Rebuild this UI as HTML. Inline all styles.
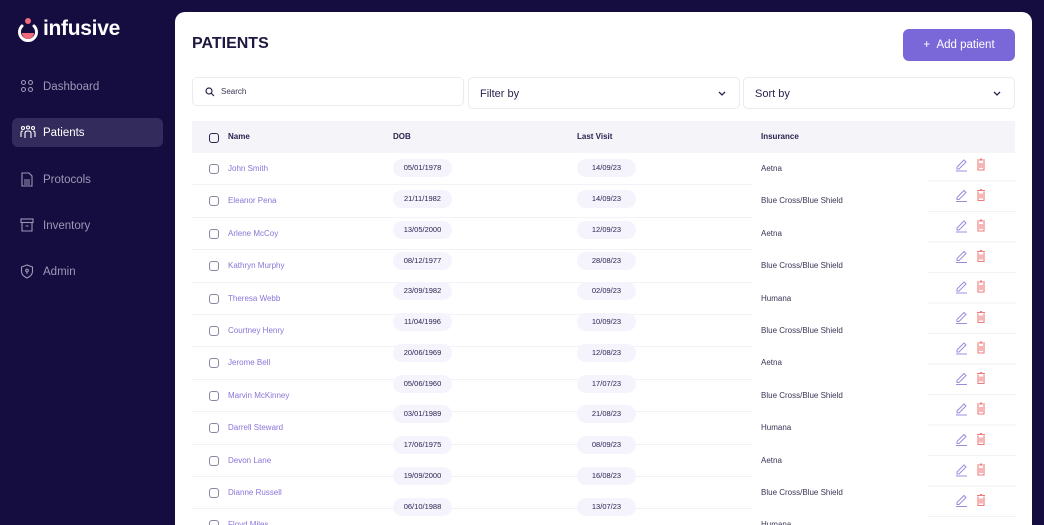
<!DOCTYPE html>
<html style="width:1044px;height:525px;overflow:hidden"><head><meta charset="utf-8"><style>
*{margin:0;padding:0;box-sizing:border-box}
body{width:1044px;height:525px;overflow:hidden;background:#150d3f;font-family:"Liberation Sans",sans-serif;position:relative}
.abs{position:absolute}
.nav{position:absolute;left:12px;width:151px;height:29px;border-radius:6px;color:#9d98b8;font-size:11.5px;display:flex;align-items:center;padding-left:31px}
.nav svg{position:absolute;left:8px;top:7px}
.nav.on{background:#332b5c;color:#fff}
.panel{position:absolute;left:175px;top:12px;width:857px;height:530px;background:#fff;border-radius:10px;overflow:hidden}
.t{position:absolute;font-size:8px;color:#2a2450;white-space:nowrap}
.n{color:#8b75d9;left:53px}
.i{color:#3a3555}
.cb{position:absolute;left:34px;width:10px;height:10px;border:1px solid #8a86a0;border-radius:3px}
.pill{position:absolute;width:59px;height:18px;border-radius:9px;background:#f5f3fc;font-size:7.5px;color:#2a2450;text-align:center;line-height:18px}
.line{position:absolute;height:1px;background:#f2f1f6}
.ic{position:absolute}
</style></head><body>
<svg class="abs" style="left:16px;top:16px" width="26" height="28" viewBox="0 0 26 28"><circle cx="12" cy="5" r="3" fill="#ef6b7b"/><path d="M6 10 A8.5 8.5 0 1 0 18 10" fill="none" stroke="#fff" stroke-width="3" stroke-linecap="round"/><path d="M6 17 A6 6 0 0 0 18 17 Z" fill="#ef6b7b"/></svg>
<div class="abs" style="left:43px;top:17px;color:#fff;font-size:21px;font-weight:bold;letter-spacing:-0.3px">infusive</div>
<div class="nav" style="top:72px"><svg width="14" height="14" viewBox="0 0 14 14" fill="none" stroke="#9d98b8" stroke-width="1.1"><circle cx="3.5" cy="3.5" r="2"/><circle cx="10.5" cy="3.5" r="2"/><circle cx="3.5" cy="10.5" r="2"/><circle cx="10.5" cy="10.5" r="2"/></svg>Dashboard</div>
<div class="nav on" style="top:118px"><svg width="16" height="14" viewBox="0 0 16 14" fill="none" stroke="#fff" stroke-width="1.1"><circle cx="3" cy="3" r="1.5"/><circle cx="8" cy="2.5" r="1.5"/><circle cx="13" cy="3" r="1.5"/><path d="M1 12V7.5Q1 6 3 6M15 12V7.5Q15 6 13 6M5 13V8q0-2 3-2t3 2v5"/></svg>Patients</div>
<div class="nav" style="top:165px"><svg width="14" height="15" viewBox="0 0 14 15" fill="none" stroke="#9d98b8" stroke-width="1.1"><path d="M2 1h7l3 3v10H2z M4 8h6M4 10h6M4 12h6"/></svg>Protocols</div>
<div class="nav" style="top:211px"><svg width="14" height="14" viewBox="0 0 14 14" fill="none" stroke="#9d98b8" stroke-width="1.1"><rect x="1" y="1" width="12" height="3.5"/><path d="M2 4.5V13h10V4.5M5.5 8h3"/></svg>Inventory</div>
<div class="nav" style="top:257px"><svg width="14" height="15" viewBox="0 0 14 15" fill="none" stroke="#9d98b8" stroke-width="1.1"><path d="M7 1L1.5 3v4.5Q1.5 11.5 7 14q5.5-2.5 5.5-6.5V3z"/><circle cx="7" cy="6.5" r="1.3"/><path d="M7 7.8V10"/></svg>Admin</div>

<div class="panel">
<div class="abs" style="left:17px;top:23px;font-size:16px;font-weight:bold;color:#1e1740">PATIENTS</div>
<div class="abs" style="left:728px;top:17px;width:112px;height:32px;border-radius:6px;background:#7a67d8;color:#fff;font-size:11.5px;line-height:32px;text-align:center">+&nbsp;&nbsp;Add patient</div>
<div class="abs" style="left:17px;top:65px;width:272px;height:29px;border:1px solid #ebeaf0;border-radius:5px"><svg class="ic" style="left:12px;top:9px" width="10" height="10" viewBox="0 0 10 10" fill="none" stroke="#2a2450" stroke-width="1.2"><circle cx="4" cy="4" r="3"/><path d="M6.3 6.3L9 9"/></svg><span class="t" style="left:28px;top:9px;color:#3a3555">Search</span></div>
<div class="abs" style="left:293px;top:65px;width:272px;height:32px;border:1px solid #ebeaf0;border-radius:5px"><span class="t" style="left:11px;top:10px;font-size:11px">Filter by</span><svg class="ic" style="left:249px;top:13px" width="8" height="6" viewBox="0 0 8 6" fill="none" stroke="#2a2450" stroke-width="1.3"><path d="M1 1l3 3 3-3"/></svg></div>
<div class="abs" style="left:568px;top:65px;width:272px;height:32px;border:1px solid #ebeaf0;border-radius:5px"><span class="t" style="left:11px;top:10px;font-size:11px">Sort by</span><svg class="ic" style="left:249px;top:13px" width="8" height="6" viewBox="0 0 8 6" fill="none" stroke="#2a2450" stroke-width="1.3"><path d="M1 1l3 3 3-3"/></svg></div>
<div class="abs" style="left:17px;top:109px;width:823px;height:32px;background:#f5f4f9"></div>
<div class="cb" style="top:121px;border-color:#2a2450"></div>
<div class="t" style="left:53px;top:120px;font-weight:bold;font-size:8px">Name</div>
<div class="t" style="left:218px;top:120px;font-weight:bold">DOB</div>
<div class="t" style="left:402px;top:120px;font-weight:bold">Last Visit</div>
<div class="t" style="left:586px;top:120px;font-weight:bold">Insurance</div>
</div>
<div class="abs" style="left:175px;top:12px;width:857px;height:513px;overflow:hidden">
<div class="cb" style="top:152px"></div><div class="t n" style="top:152px">John Smith</div><div class="t i" style="left:586px;top:152px">Aetna</div><div class="line" style="left:17px;top:172px;width:560px"></div>
<div class="cb" style="top:184px"></div><div class="t n" style="top:184px">Eleanor Pena</div><div class="t i" style="left:586px;top:184px">Blue Cross/Blue Shield</div><div class="line" style="left:17px;top:205px;width:560px"></div>
<div class="cb" style="top:217px"></div><div class="t n" style="top:217px">Arlene McCoy</div><div class="t i" style="left:586px;top:217px">Aetna</div><div class="line" style="left:17px;top:237px;width:560px"></div>
<div class="cb" style="top:249px"></div><div class="t n" style="top:249px">Kathryn Murphy</div><div class="t i" style="left:586px;top:249px">Blue Cross/Blue Shield</div><div class="line" style="left:17px;top:270px;width:560px"></div>
<div class="cb" style="top:282px"></div><div class="t n" style="top:282px">Theresa Webb</div><div class="t i" style="left:586px;top:282px">Humana</div><div class="line" style="left:17px;top:302px;width:560px"></div>
<div class="cb" style="top:314px"></div><div class="t n" style="top:314px">Courtney Henry</div><div class="t i" style="left:586px;top:314px">Blue Cross/Blue Shield</div><div class="line" style="left:17px;top:334px;width:560px"></div>
<div class="cb" style="top:346px"></div><div class="t n" style="top:346px">Jerome Bell</div><div class="t i" style="left:586px;top:346px">Aetna</div><div class="line" style="left:17px;top:367px;width:560px"></div>
<div class="cb" style="top:379px"></div><div class="t n" style="top:379px">Marvin McKinney</div><div class="t i" style="left:586px;top:379px">Blue Cross/Blue Shield</div><div class="line" style="left:17px;top:399px;width:560px"></div>
<div class="cb" style="top:411px"></div><div class="t n" style="top:411px">Darrell Steward</div><div class="t i" style="left:586px;top:411px">Humana</div><div class="line" style="left:17px;top:432px;width:560px"></div>
<div class="cb" style="top:444px"></div><div class="t n" style="top:444px">Devon Lane</div><div class="t i" style="left:586px;top:444px">Aetna</div><div class="line" style="left:17px;top:464px;width:560px"></div>
<div class="cb" style="top:476px"></div><div class="t n" style="top:476px">Dianne Russell</div><div class="t i" style="left:586px;top:476px">Blue Cross/Blue Shield</div><div class="line" style="left:17px;top:496px;width:560px"></div>
<div class="cb" style="top:508px"></div><div class="t n" style="top:508px">Floyd Miles</div><div class="t i" style="left:586px;top:508px">Humana</div>
<div class="pill" style="left:218px;top:147px">05/01/1978</div><div class="pill" style="left:402px;top:147px">14/09/23</div>
<div class="pill" style="left:218px;top:178px">21/11/1982</div><div class="pill" style="left:402px;top:178px">14/09/23</div>
<div class="pill" style="left:218px;top:209px">13/05/2000</div><div class="pill" style="left:402px;top:209px">12/09/23</div>
<div class="pill" style="left:218px;top:240px">08/12/1977</div><div class="pill" style="left:402px;top:240px">28/08/23</div>
<div class="pill" style="left:218px;top:270px">23/09/1982</div><div class="pill" style="left:402px;top:270px">02/09/23</div>
<div class="pill" style="left:218px;top:301px">11/04/1996</div><div class="pill" style="left:402px;top:301px">10/09/23</div>
<div class="pill" style="left:218px;top:332px">20/06/1969</div><div class="pill" style="left:402px;top:332px">12/08/23</div>
<div class="pill" style="left:218px;top:363px">05/06/1960</div><div class="pill" style="left:402px;top:363px">17/07/23</div>
<div class="pill" style="left:218px;top:393px">03/01/1989</div><div class="pill" style="left:402px;top:393px">21/08/23</div>
<div class="pill" style="left:218px;top:424px">17/06/1975</div><div class="pill" style="left:402px;top:424px">08/09/23</div>
<div class="pill" style="left:218px;top:455px">19/09/2000</div><div class="pill" style="left:402px;top:455px">16/08/23</div>
<div class="pill" style="left:218px;top:486px">06/10/1988</div><div class="pill" style="left:402px;top:486px">13/07/23</div>
</div>
<svg class="abs" style="left:928px;top:152px" width="88" height="373" viewBox="0 0 88 373">
<defs><g id="a"><path d="M29 15l7-7 2 2-7 7h-2zM28 19h11" fill="none" stroke="#9c8ce0" stroke-width="1"/><path d="M49 8h8M52 7h2M50 9v9h6V9M52 11v5M54 11v5" fill="none" stroke="#ef7b7b" stroke-width="1.1"/><path d="M0 29h88" stroke="#f2f1f6"/></g></defs>
<use href="#a" y="0"/><use href="#a" y="30.5"/><use href="#a" y="61"/><use href="#a" y="91.5"/><use href="#a" y="122"/><use href="#a" y="152.5"/><use href="#a" y="183"/><use href="#a" y="213.5"/><use href="#a" y="244"/><use href="#a" y="274.5"/><use href="#a" y="305"/><use href="#a" y="335.5"/>
</svg>
</body></html>
